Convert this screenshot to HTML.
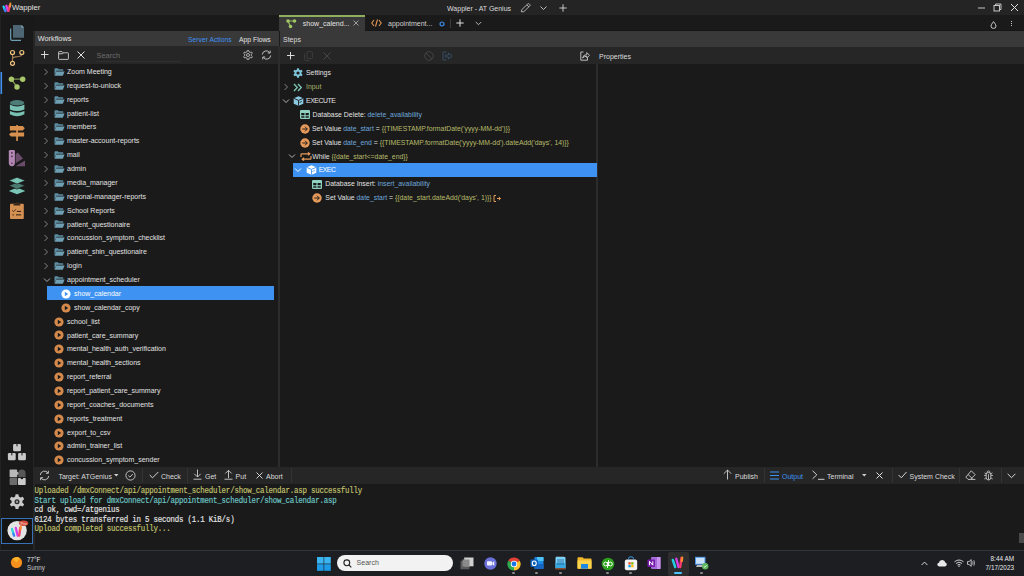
<!DOCTYPE html>
<html><head><meta charset="utf-8">
<style>
*{box-sizing:border-box;margin:0;padding:0}
html,body{width:1024px;height:576px;overflow:hidden;background:#1a1a1a;font-family:"Liberation Sans",sans-serif;font-size:7px;color:#e2e2e2}
.abs{position:absolute}
.row{position:absolute;left:0;width:279px;height:13.87px}
.row .ic{position:absolute;top:0;height:13.87px;display:flex;align-items:center}
.row .tx{position:absolute;top:0;line-height:13.87px;white-space:nowrap;color:#e2e2e2}
.sel{position:absolute;background:#3e93f2}
.srow{position:absolute;left:279px;width:318px;height:13.87px}
.srow .ic{position:absolute;top:0;height:13.87px;display:flex;align-items:center}
.srow .tx{position:absolute;top:0;line-height:13.87px;white-space:nowrap;color:#e2e2e2;font-size:6.88px}
.b{color:#6fa9dc}.g{color:#b7bb6a}.w{color:#e2e2e2}
.tb{position:absolute;display:flex;align-items:center;justify-content:center}
.t{position:absolute;white-space:nowrap}
.mono{font-family:"Liberation Mono",monospace;font-size:7.4px;letter-spacing:-0.18px;line-height:8.1px;white-space:pre;transform:scaleY(1.19);transform-origin:0 0;-webkit-text-stroke:0.15px}
.sep{position:absolute;width:1px;background:#333}
</style></head><body>
<!-- title bar -->
<div class="abs" style="left:0;top:0;width:1024px;height:15px;background:#242424"></div>
<!-- dark under title -->
<div class="abs" style="left:0;top:15px;width:279px;height:16px;background:#1a1a1a"></div>
<!-- sidebar -->
<div class="abs" style="left:0;top:15px;width:34px;height:535px;background:#191919"></div>

<!-- left panel -->
<div class="abs" style="left:0px;top:15px;width:1px;height:535px;background:#222222"></div>
<div class="abs" style="left:33px;top:31px;width:2px;height:519px;background:#262626"></div>
<div class="abs" style="left:35px;top:31px;width:244px;height:15px;background:#393939"></div>
<div class="abs" style="left:34px;top:46px;width:245px;height:18px;background:#262626"></div>
<div class="abs" style="left:34px;top:64px;width:245px;height:403px;background:#1a1a1a"></div>
<div class="abs" style="left:278px;top:46px;width:2px;height:421px;background:#2c2c2c"></div>

<!-- tab bar -->
<div class="abs" style="left:280px;top:15px;width:744px;height:16px;background:#1a1a1a"></div>
<div class="abs" style="left:279px;top:15px;width:86px;height:16px;background:#393939"></div>
<div class="abs" style="left:279px;top:15px;width:86px;height:2px;background:#8fae5e"></div>
<!-- steps header -->
<div class="abs" style="left:280px;top:31px;width:744px;height:16px;background:#393939"></div>
<div class="abs" style="left:365px;top:30px;width:659px;height:1px;background:#151515"></div>
<!-- steps toolbar -->
<div class="abs" style="left:280px;top:47px;width:317px;height:17px;background:#262626"></div>
<div class="abs" style="left:597px;top:47px;width:427px;height:17px;background:#262626"></div>
<div class="abs" style="left:596px;top:64px;width:2px;height:403px;background:#2c2c2c"></div>

<!-- bottom toolbar -->
<div class="abs" style="left:34px;top:467px;width:990px;height:17px;background:#262626"></div>
<!-- taskbar -->
<div class="abs" style="left:0;top:550px;width:1024px;height:26px;background:#1c1e22;border-top:1px solid #303338"></div>


<!-- title bar content -->
<svg class="abs" style="left:2px;top:2px" width="10" height="11" viewBox="0 0 10 11">
<path d="M1.6 4.6 L3.3 8.8" stroke="#22d3ee" stroke-width="2.3" stroke-linecap="round"/>
<path d="M2.6 7.2 L3.4 9" stroke="#3b82f6" stroke-width="2.2" stroke-linecap="round"/>
<path d="M4.4 3.8 L6 8.8" stroke="#d946ef" stroke-width="2.3" stroke-linecap="round"/>
<path d="M7.6 3.6 L6.6 8.8" stroke="#fb3a6e" stroke-width="2.3" stroke-linecap="round"/>
<path d="M8.4 1.6 L8 4.6" stroke="#fb923c" stroke-width="2" stroke-linecap="round"/>
</svg>
<div class="t" style="left:12px;top:0.3px;line-height:15px;font-size:7.7px;color:#e4e4e4">Wappler</div>
<div class="t" style="left:447px;top:0.5px;line-height:16px;font-size:7px;color:#dcdcdc">Wappler - AT Genius</div>
<svg class="abs" style="left:520px;top:3px" width="11" height="10" viewBox="0 0 11 10"><path d="M1.3 8.8 L1.8 6.6 L7.8 0.9 Q8.5 0.3 9.2 0.9 L9.9 1.6 Q10.4 2.3 9.8 2.9 L3.8 8.7 Z M6.8 1.9 L8.9 3.9" fill="none" stroke="#d0d0d0" stroke-width="0.8" stroke-linejoin="round"/></svg>
<svg class="abs" style="left:540px;top:5px" width="7" height="6" viewBox="0 0 7 6"><path d="M0.5 1.5 L3.5 4.5 L6.5 1.5" fill="none" stroke="#d0d0d0" stroke-width="0.9"/></svg>
<svg class="abs" style="left:559px;top:4px" width="8" height="8" viewBox="0 0 8 8"><path d="M4 0.3 V7.7 M0.3 4 H7.7" fill="none" stroke="#d8d8d8" stroke-width="0.9"/></svg>
<svg class="abs" style="left:978px;top:7px" width="8" height="2" viewBox="0 0 8 2"><path d="M0 1 H7" stroke="#d8d8d8" stroke-width="0.9"/></svg>
<svg class="abs" style="left:993px;top:3px" width="9" height="9" viewBox="0 0 9 9"><rect x="1" y="2.5" width="5.5" height="5.5" fill="none" stroke="#d8d8d8" stroke-width="0.9"/><path d="M2.6 2.5 V1 H8 V6.5 H6.5" fill="none" stroke="#d8d8d8" stroke-width="0.9"/></svg>
<svg class="abs" style="left:1010px;top:3px" width="9" height="9" viewBox="0 0 9 9"><path d="M1 1 L8 8 M8 1 L1 8" stroke="#e0e0e0" stroke-width="1"/></svg>

<!-- tab bar content -->
<svg class="abs" style="left:286px;top:18.8px" width="11" height="10" viewBox="0 0 11 10"><path d="M2 2 L8.5 2 M2 2 L4.5 7.5" stroke="#94b85a" stroke-width="1.2"/><circle cx="2" cy="2" r="1.8" fill="#a3c766"/><circle cx="8.5" cy="2" r="1.8" fill="#a3c766"/><circle cx="4.5" cy="7.5" r="1.8" fill="#a3c766"/></svg>
<div class="t" style="left:302.8px;top:16px;line-height:16px;color:#e2e2e2">show_calend...</div>
<svg class="abs" style="left:353px;top:20px" width="6" height="6" viewBox="0 0 6 6"><path d="M0.5 0.5 L5.5 5.5 M5.5 0.5 L0.5 5.5" stroke="#b8b8b8" stroke-width="0.8"/></svg>
<svg class="abs" style="left:371px;top:19px" width="11" height="8" viewBox="0 0 11 8"><path d="M3 1 L0.8 4 L3 7 M8 1 L10.2 4 L8 7 M6.5 0.5 L4.5 7.5" fill="none" stroke="#e0954f" stroke-width="1.1"/></svg>
<div class="t" style="left:388px;top:16px;line-height:16px;color:#d0d0d0">appointment...</div>
<svg class="abs" style="left:439px;top:20.5px" width="6" height="6" viewBox="0 0 6 6"><circle cx="3" cy="3" r="2" fill="none" stroke="#3f92f0" stroke-width="1.2"/></svg>
<div class="abs" style="left:450px;top:19px;width:1px;height:9px;background:#3a3a3a"></div>
<svg class="abs" style="left:456px;top:19px" width="8" height="8" viewBox="0 0 8 8"><path d="M4 0.3 V7.7 M0.3 4 H7.7" fill="none" stroke="#e0e0e0" stroke-width="1"/></svg>
<svg class="abs" style="left:475px;top:21px" width="7" height="5" viewBox="0 0 7 5"><path d="M0.8 1 L3.5 3.7 L6.2 1" fill="none" stroke="#c8c8c8" stroke-width="0.9"/></svg>
<svg class="abs" style="left:989.5px;top:21px" width="7" height="8" viewBox="0 0 7 8"><path d="M3.5 0.6 Q1 3.6 1 5.1 Q1 7.4 3.5 7.4 Q6 7.4 6 5.1 Q6 3.6 3.5 0.6 Z" fill="none" stroke="#d8d8d8" stroke-width="0.9"/></svg>
<div class="abs" style="left:1011px;top:21px;width:1px;height:1px;background:#c8c8c8"></div>
<div class="abs" style="left:1011px;top:23px;width:1px;height:1px;background:#c8c8c8"></div>
<div class="abs" style="left:1011px;top:25px;width:1px;height:1px;background:#c8c8c8"></div>

<!-- left panel header -->
<div class="t" style="left:37.8px;top:31.3px;line-height:15px;font-size:7.3px;color:#e2e2e2">Workflows</div>
<div class="t" style="left:188px;top:31.5px;line-height:15px;font-size:6.75px;color:#3f92f0">Server Actions</div>
<div class="t" style="left:239px;top:31.5px;line-height:15px;font-size:6.8px;color:#e2e2e2">App Flows</div>
<!-- left toolbar -->
<svg class="abs" style="left:41px;top:51px" width="8" height="8" viewBox="0 0 8 8"><path d="M3.5 0 V7.5 M0 3.5 H7.5" fill="none" stroke="#e0e0e0" stroke-width="0.95"/></svg>
<svg class="abs" style="left:58px;top:51px" width="11" height="9" viewBox="0 0 11 9"><path d="M0.6 1.2 Q0.6 0.6 1.2 0.6 L4 0.6 L5 1.8 L9.8 1.8 Q10.4 1.8 10.4 2.4 L10.4 7.8 Q10.4 8.4 9.8 8.4 L1.2 8.4 Q0.6 8.4 0.6 7.8 Z M0.6 2.8 H4.5 L5.2 1.9" fill="none" stroke="#cfcfcf" stroke-width="0.9"/></svg>
<svg class="abs" style="left:77px;top:51px" width="8" height="8" viewBox="0 0 8 8"><path d="M0.5 0.5 L7.5 7.5 M7.5 0.5 L0.5 7.5" fill="none" stroke="#e0e0e0" stroke-width="1"/></svg>
<div class="t" style="left:96.4px;top:47.3px;line-height:17px;font-size:7.5px;color:#6c6c6c">Search</div>
<div class="abs" style="left:96px;top:61px;width:85px;height:1px;background:#2f2f2f"></div>
<svg class="abs" style="left:243px;top:50px" width="10" height="10" viewBox="0 0 10 10"><path d="M4.2 0.6 H5.8 L6.1 1.9 L7.2 2.5 L8.5 2 L9.3 3.4 L8.3 4.3 V5.7 L9.3 6.6 L8.5 8 L7.2 7.5 L6.1 8.1 L5.8 9.4 H4.2 L3.9 8.1 L2.8 7.5 L1.5 8 L0.7 6.6 L1.7 5.7 V4.3 L0.7 3.4 L1.5 2 L2.8 2.5 L3.9 1.9 Z" fill="none" stroke="#cfcfcf" stroke-width="0.8" stroke-linejoin="round"/><circle cx="5" cy="5" r="1.5" fill="none" stroke="#cfcfcf" stroke-width="0.8"/></svg>
<svg class="abs" style="left:261px;top:50px" width="11" height="10" viewBox="0 0 11 10"><path d="M1.3 4.5 A4 4 0 0 1 8.6 2.6 M9.7 5.5 A4 4 0 0 1 2.4 7.4" fill="none" stroke="#cfcfcf" stroke-width="0.9"/><path d="M9.2 0.6 V3 H6.8 M1.8 9.4 V7 H4.2" fill="none" stroke="#cfcfcf" stroke-width="0.9"/></svg>

<!-- steps header -->
<div class="t" style="left:283px;top:32px;line-height:16px;color:#dedede">Steps</div>
<!-- steps toolbar -->
<svg class="abs" style="left:287px;top:52px" width="8" height="8" viewBox="0 0 8 8"><path d="M3.5 0 V7.5 M0 3.5 H7.5" fill="none" stroke="#e4e4e4" stroke-width="0.95"/></svg>
<svg class="abs" style="left:304px;top:51px" width="9" height="10" viewBox="0 0 9 10"><rect x="3" y="0.6" width="5.4" height="7" rx="1" fill="none" stroke="#404040" stroke-width="0.9"/><path d="M1.5 2.4 Q0.6 2.4 0.6 3.3 V8.6 Q0.6 9.4 1.5 9.4 H5.5" fill="none" stroke="#404040" stroke-width="0.9"/></svg>
<svg class="abs" style="left:323px;top:52px" width="8" height="8" viewBox="0 0 8 8"><path d="M0.5 0.5 L7.5 7.5 M7.5 0.5 L0.5 7.5" fill="none" stroke="#4a4a4a" stroke-width="0.9"/></svg>
<svg class="abs" style="left:424px;top:51px" width="10" height="10" viewBox="0 0 10 10"><circle cx="5" cy="5" r="4.3" fill="none" stroke="#474747" stroke-width="0.9"/><path d="M2 2 L8 8" stroke="#474747" stroke-width="0.9"/></svg>
<svg class="abs" style="left:442px;top:51px" width="11" height="10" viewBox="0 0 11 10"><path d="M4.5 1 H1 V9 H4.5" fill="none" stroke="#35506a" stroke-width="0.9"/><path d="M3.3 4 H6.6 V2 L10.2 5 L6.6 8 V6 H3.3 Z" fill="none" stroke="#35506a" stroke-width="0.9" stroke-linejoin="round"/></svg>
<svg class="abs" style="left:580px;top:51px" width="10" height="10" viewBox="0 0 10 10"><path d="M3.5 1 H0.8 V9.2 H7.5 V7" fill="none" stroke="#cfcfcf" stroke-width="0.9"/><path d="M2.6 7 Q3 3.6 6.8 3.6 V1.6 L9.5 4.3 L6.8 7 V5.2 Q4.2 5.2 2.6 7 Z" fill="none" stroke="#cfcfcf" stroke-width="0.9"/></svg>
<div class="t" style="left:599px;top:48px;line-height:17px;color:#dedede">Properties</div>


<!-- sidebar icons -->
<svg class="abs" style="left:0;top:15px" width="34" height="535" viewBox="0 15 34 535">
 <!-- pages -->
 <path d="M13 25 H21.5 L24 27.5 V37.7 H13 Z" fill="#4e6673"/>
 <path d="M21.5 25 V27.5 H24" fill="#8bb3c4"/>
 <path d="M10.7 28.5 V39 Q10.7 40.3 12 40.3 H21" fill="none" stroke="#6d9fb6" stroke-width="1.2"/>
 <!-- git -->
 <path d="M12.5 54.5 V61.5 M12.5 59 Q12.5 57 16 56.8 Q21.8 56.5 21.8 54.5" fill="none" stroke="#9c7a52" stroke-width="1.2"/>
 <circle cx="12.5" cy="52.5" r="2" fill="#222" stroke="#efc27c" stroke-width="1.2"/>
 <circle cx="21.8" cy="52.5" r="2" fill="#222" stroke="#efc27c" stroke-width="1.2"/>
 <circle cx="12.5" cy="63.3" r="2" fill="#222" stroke="#efc27c" stroke-width="1.2"/>
 <!-- active bar -->
 <rect x="0.5" y="72" width="1.6" height="22" fill="#3f92f0"/>
 <!-- flow -->
 <path d="M11.4 79.2 H22.7 M11.4 79.2 L17 87" stroke="#7c9450" stroke-width="1.3"/>
 <circle cx="11.4" cy="79.2" r="2.7" fill="#a8c66a"/>
 <circle cx="22.7" cy="79.2" r="2.7" fill="#a8c66a"/>
 <circle cx="17" cy="87" r="2.7" fill="#a8c66a"/>
 <!-- db -->
 <ellipse cx="17.1" cy="102.8" rx="7.2" ry="2.7" fill="#4e7c79"/>
 <path d="M9.9 104.5 Q17.1 108.5 24.4 104.5 V109.5 Q17.1 112.5 9.9 109.5 Z" fill="#79c1b2"/>
 <path d="M9.9 111 Q17.1 114.5 24.4 111 V114.3 Q17.1 118.2 9.9 114.3 Z" fill="#79c1b2"/>
 <!-- signpost -->
 <rect x="16.2" y="125" width="1.7" height="16" fill="#d8904e"/>
 <path d="M9.9 126 H22.8 L24.8 128.2 L22.8 130.4 H9.9 Z" fill="#d8904e"/>
 <path d="M24.1 132.5 H11 L9 134.5 L11 136.5 H24.1 Z" fill="#d8904e"/>
 <!-- palette -->
 <path d="M15.6 154.2 L17.8 152.4 L23 158.6 L15.6 163.2 Z" fill="#6a4b6a"/>
 <path d="M15.6 166.2 L25 160.6 V166.2 Z" fill="#6a4b6a"/>
 <path d="M8.8 151.2 Q8.8 150 10 150 H13.7 Q14.9 150 14.9 151.2 V163.1 Q14.9 166.2 11.85 166.2 Q8.8 166.2 8.8 163.1 Z" fill="#b387b3"/>
 <circle cx="11.9" cy="152.9" r="0.8" fill="#3a2a3a"/><circle cx="11.9" cy="156.4" r="0.8" fill="#3a2a3a"/><circle cx="11.9" cy="163.2" r="0.8" fill="#3a2a3a"/>
 <!-- layers -->
 <path d="M17 187.6 L25.3 190.9 L17 194.3 L8.8 190.9 Z" fill="#79c6b6"/>
 <path d="M17 182.4 L25.3 185.7 L17 189.1 L8.8 185.7 Z" fill="#4b7a70" stroke="#191919" stroke-width="0.7"/>
 <path d="M17 177.3 L25.3 180.6 L17 184 L8.8 180.6 Z" fill="#79c6b6" stroke="#191919" stroke-width="0.7"/>
 <!-- clipboard -->
 <rect x="10" y="203.8" width="13.8" height="15.1" rx="1" fill="#d48f52"/>
 <path d="M13.5 205.5 H20.3 V204 H18.5 Q18.5 202 17 202 Q15.5 202 15.5 204 H13.5 Z" fill="#3a2818"/>
 <path d="M12.3 210.3 L13.6 211.7 L16 209.2" fill="none" stroke="#3a2818" stroke-width="0.9"/>
 <rect x="16.9" y="210.9" width="4.2" height="1.1" fill="#3a2818"/>
 <rect x="12.5" y="214.3" width="1.3" height="1.1" fill="#3a2818"/><rect x="16" y="214.3" width="5.1" height="1.1" fill="#3a2818"/>
 <!-- boxes -->
 <rect x="13.1" y="443.9" width="7.8" height="7.4" rx="1.3" fill="#c9c9c9"/>
 <rect x="7.9" y="453" width="7.8" height="7.2" rx="1.3" fill="#c9c9c9"/>
 <rect x="18.1" y="453" width="7.8" height="7.2" rx="1.3" fill="#c9c9c9"/>
 <rect x="16.4" y="443.9" width="1.2" height="2.4" fill="#333"/><rect x="11.2" y="453" width="1.2" height="2.4" fill="#333"/><rect x="21.4" y="453" width="1.2" height="2.4" fill="#333"/>
 <!-- puzzle -->
 <rect x="9.6" y="469.6" width="7.6" height="7.6" rx="0.8" fill="#b8b8b8"/>
 <circle cx="17.6" cy="473.4" r="1.4" fill="#b8b8b8"/>
 <path d="M18.4 477.2 V472.4 Q18.4 469.4 21.8 469.4 Q25.6 469.4 25.6 473 V477.2 Z" fill="#575757"/>
 <rect x="9.6" y="477.9" width="7.6" height="7.2" rx="0.8" fill="#6c6c6c"/>
 <rect x="18" y="477.9" width="7.7" height="7.2" rx="0.8" fill="#cbcbcb"/>
 <circle cx="21.9" cy="478" r="1.3" fill="#191919"/>
 <!-- gear -->
 <path d="M15.6 494.3 H18.4 L18.8 496.6 L20.6 497.6 L22.8 496.8 L24.2 499.2 L22.4 500.7 V502.7 L24.2 504.2 L22.8 506.6 L20.6 505.8 L18.8 506.8 L18.4 509.1 H15.6 L15.2 506.8 L13.4 505.8 L11.2 506.6 L9.8 504.2 L11.6 502.7 V500.7 L9.8 499.2 L11.2 496.8 L13.4 497.6 L15.2 496.6 Z" fill="#c9c9c9"/>
 <circle cx="17" cy="501.7" r="2.5" fill="#2a2a2a"/><circle cx="17" cy="501.7" r="1.2" fill="#9a9a9a"/>
 <!-- avatar -->
 <rect x="1.5" y="518.5" width="31" height="25" fill="#141414" stroke="#3671b8" stroke-width="1"/>
 <circle cx="17.1" cy="530.6" r="9.7" fill="#e4e4e4"/>
 <path d="M12 529 L13.8 535" stroke="#2ad4d8" stroke-width="2.3" stroke-linecap="round"/>
 <path d="M13.4 533.5 L14.2 535.8" stroke="#3b82f6" stroke-width="2.2" stroke-linecap="round"/>
 <path d="M15.8 527.8 L17.6 535.6" stroke="#d63fe6" stroke-width="2.3" stroke-linecap="round"/>
 <path d="M20.2 528 L19.2 535.6" stroke="#fb3a6e" stroke-width="2.3" stroke-linecap="round"/>
 <path d="M20.8 526.6 L20.4 529.5" stroke="#fb8c2c" stroke-width="2" stroke-linecap="round"/>
 <ellipse cx="23.6" cy="523.3" rx="4.6" ry="2.7" fill="#d64c3c"/>
 <text x="20.6" y="524.9" font-family="Liberation Sans" font-size="4" fill="#f6e0dc">Pro</text>
</svg>


<!-- bottom toolbar content -->
<svg class="abs" style="left:39px;top:470px" width="11" height="11" viewBox="0 0 11 11"><path d="M1.3 5 A4.2 4.2 0 0 1 9 3 M9.7 6 A4.2 4.2 0 0 1 2 8" fill="none" stroke="#cfcfcf" stroke-width="0.9"/><path d="M9.4 0.8 V3.3 H6.9 M1.6 10.2 V7.7 H4.1" fill="none" stroke="#cfcfcf" stroke-width="0.9"/></svg>
<div class="t" style="left:58.4px;top:467.5px;line-height:17px;color:#dcdcdc">Target: ATGenius</div>
<svg class="abs" style="left:113.5px;top:474px" width="5" height="3" viewBox="0 0 5 3"><path d="M0 0 H4.5 L2.25 2.6 Z" fill="#d0d0d0"/></svg>
<svg class="abs" style="left:125px;top:470px" width="11" height="11" viewBox="0 0 11 11"><circle cx="5.5" cy="5.5" r="4.6" fill="none" stroke="#cfcfcf" stroke-width="0.9"/><path d="M3.3 5.6 L4.9 7.1 L7.8 4" fill="none" stroke="#cfcfcf" stroke-width="0.9"/></svg>
<div class="sep" style="left:142px;top:468px;height:15px;background:#333"></div>
<svg class="abs" style="left:148.5px;top:471px" width="10" height="8" viewBox="0 0 10 8"><path d="M0.7 4 L3.5 6.8 L9.3 1" fill="none" stroke="#d8d8d8" stroke-width="1"/></svg>
<div class="t" style="left:161px;top:467.5px;line-height:17px;color:#dcdcdc">Check</div>
<div class="sep" style="left:186.5px;top:468px;height:15px;background:#333"></div>
<svg class="abs" style="left:193px;top:469px" width="9" height="11" viewBox="0 0 9 11"><path d="M4.5 0.5 V8 M1.3 4.8 L4.5 8 L7.7 4.8 M0.5 10.2 H8.5" fill="none" stroke="#d0d0d0" stroke-width="0.9"/></svg>
<div class="t" style="left:205px;top:467.5px;line-height:17px;color:#dcdcdc">Get</div>
<svg class="abs" style="left:224px;top:469px" width="9" height="11" viewBox="0 0 9 11"><path d="M4.5 9 V1.3 M1.3 4.5 L4.5 1.3 L7.7 4.5 M0.5 10.2 H8.5" fill="none" stroke="#d0d0d0" stroke-width="0.9"/></svg>
<div class="t" style="left:235.6px;top:467.5px;line-height:17px;color:#dcdcdc">Put</div>
<svg class="abs" style="left:255.5px;top:472px" width="7" height="7" viewBox="0 0 7 7"><path d="M0.5 0.5 L6.5 6.5 M6.5 0.5 L0.5 6.5" fill="none" stroke="#e0e0e0" stroke-width="0.9"/></svg>
<div class="t" style="left:266px;top:467.5px;line-height:17px;color:#dcdcdc">Abort</div>
<div class="sep" style="left:290.5px;top:468px;height:15px;background:#333"></div>

<svg class="abs" style="left:723px;top:469px" width="9" height="11" viewBox="0 0 9 11"><path d="M4.5 10.5 V1 M0.8 4.7 L4.5 1 L8.2 4.7" fill="none" stroke="#d0d0d0" stroke-width="0.9"/></svg>
<div class="t" style="left:735px;top:467.5px;line-height:17px;color:#dcdcdc">Publish</div>
<div class="sep" style="left:764px;top:468px;height:15px;background:#333"></div>
<svg class="abs" style="left:770px;top:471px" width="9" height="9" viewBox="0 0 9 9"><path d="M0 1 H9 M0 4.5 H9 M0 8 H9" fill="none" stroke="#3f92f0" stroke-width="1"/></svg>
<div class="t" style="left:782px;top:467.5px;line-height:17px;color:#3f92f0">Output</div>
<svg class="abs" style="left:811.5px;top:470px" width="13" height="10" viewBox="0 0 13 10"><path d="M0.6 0.8 L4.8 4.8 L0.6 8.8 M6 9.3 H12.5" fill="none" stroke="#d8d8d8" stroke-width="0.95"/></svg>
<div class="t" style="left:827px;top:467.5px;line-height:17px;color:#dcdcdc">Terminal</div>
<svg class="abs" style="left:862px;top:474px" width="5" height="3" viewBox="0 0 5 3"><path d="M0 0 H4.5 L2.25 2.6 Z" fill="#d0d0d0"/></svg>
<svg class="abs" style="left:876px;top:472px" width="7" height="7" viewBox="0 0 7 7"><path d="M0.5 0.5 L6.5 6.5 M6.5 0.5 L0.5 6.5" fill="none" stroke="#e4e4e4" stroke-width="1"/></svg>
<div class="sep" style="left:891.5px;top:468px;height:15px;background:#333"></div>
<svg class="abs" style="left:898px;top:471px" width="9" height="8" viewBox="0 0 9 8"><path d="M0.6 4 L3.3 6.8 L8.5 1" fill="none" stroke="#d8d8d8" stroke-width="1"/></svg>
<div class="t" style="left:909.6px;top:467.5px;line-height:17px;color:#dcdcdc">System Check</div>
<div class="sep" style="left:958.5px;top:468px;height:15px;background:#333"></div>
<svg class="abs" style="left:964.5px;top:470px" width="11" height="10" viewBox="0 0 11 10"><path d="M6.3 0.8 L10.2 4.7 L5.4 9.4 H3.1 L0.8 7.1 Z M3.2 4.6 L7.6 8.9 M5.5 9.4 H10.4" fill="none" stroke="#d0d0d0" stroke-width="0.9" stroke-linejoin="round"/></svg>
<svg class="abs" style="left:983px;top:470px" width="11" height="11" viewBox="0 0 11 11"><path d="M3.2 4 Q3.2 2.6 5.5 2.6 Q7.8 2.6 7.8 4 V7.4 Q7.8 10 5.5 10 Q3.2 10 3.2 7.4 Z" fill="none" stroke="#d0d0d0" stroke-width="0.85"/><path d="M4 2.8 Q4 0.9 5.5 0.9 Q7 0.9 7 2.8 M5.5 4.2 V9.8 M3.2 5.4 H1 M7.8 5.4 H10 M3.2 7.8 L1.3 9 M7.8 7.8 L9.7 9 M3.2 4 L1.6 2.8 M7.8 4 L9.4 2.8" fill="none" stroke="#d0d0d0" stroke-width="0.8"/></svg>
<div class="sep" style="left:1000.5px;top:468px;height:15px;background:#333"></div>
<svg class="abs" style="left:1007px;top:473px" width="9" height="6" viewBox="0 0 9 6"><path d="M0.6 0.8 L4.5 4.7 L8.4 0.8" fill="none" stroke="#d8d8d8" stroke-width="1"/></svg>

<!-- output -->
<div class="t mono" style="left:34.4px;top:485.6px;color:#c3c36f">Uploaded /dmxConnect/api/appointment_scheduler/show_calendar.asp successfully
<span style="color:#6fc8c8">Start upload for dmxConnect/api/appointment_scheduler/show_calendar.asp</span>
<span style="color:#e4e4e4">cd ok, cwd=/atgenius</span>
<span style="color:#e4e4e4">6124 bytes transferred in 5 seconds (1.1 KiB/s)</span>
Upload completed successfully...</div>
<div class="abs" style="left:1019px;top:533px;width:5px;height:10px;background:#4a4a4a"></div>

<!-- taskbar content -->
<svg class="abs" style="left:10px;top:556px" width="13" height="13" viewBox="0 0 13 13"><circle cx="6.5" cy="6.5" r="5.6" fill="#f5901e"/><path d="M2.5 3 A5.6 5.6 0 0 1 10 2.2 L6.5 6.5 Z" fill="#fbb32a"/></svg>
<div class="t" style="left:27px;top:555.5px;font-size:6.3px;line-height:8px;color:#e8e8e8">77°F</div>
<div class="t" style="left:27px;top:563.5px;font-size:6.3px;line-height:8px;color:#c8c8c8">Sunny</div>

<svg class="abs" style="left:316.6px;top:556.7px" width="14" height="14" viewBox="0 0 14 14"><rect x="0" y="0" width="6.6" height="6.6" fill="#3bb4f2"/><rect x="7.2" y="0" width="6.6" height="6.6" fill="#3bb4f2"/><rect x="0" y="7.2" width="6.6" height="6.6" fill="#1f9ae6"/><rect x="7.2" y="7.2" width="6.6" height="6.6" fill="#1f9ae6"/></svg>
<div class="abs" style="left:336.7px;top:554.8px;width:116.6px;height:16.6px;border-radius:8.3px;background:#f2f2f2"></div>
<svg class="abs" style="left:342.5px;top:558.5px" width="9" height="9" viewBox="0 0 9 9"><circle cx="3.8" cy="3.8" r="2.9" fill="none" stroke="#202020" stroke-width="1.1"/><path d="M5.9 5.9 L8.3 8.3" stroke="#202020" stroke-width="1.2"/></svg>
<div class="t" style="left:356.6px;top:555px;line-height:16px;font-size:7px;color:#555">Search</div>

<!-- task view -->
<svg class="abs" style="left:459.5px;top:556.5px" width="14" height="13" viewBox="0 0 14 13"><rect x="0.5" y="3.8" width="9" height="8.5" fill="#5a5a5a"/><rect x="4.2" y="0.5" width="9.3" height="8.8" fill="#d0d0d0"/><rect x="2.5" y="2.5" width="7" height="7" fill="#8a8a8a"/></svg>
<!-- teams -->
<svg class="abs" style="left:483.5px;top:556.5px" width="13" height="13" viewBox="0 0 13 13"><circle cx="6.5" cy="6.5" r="6.2" fill="#6b6fd8"/><rect x="3" y="4.2" width="5" height="4.4" rx="0.8" fill="#f0f0ff"/><path d="M8.4 5.5 L10.3 4.3 V8.7 L8.4 7.5 Z" fill="#f0f0ff"/></svg>
<!-- chrome -->
<svg class="abs" style="left:506.5px;top:556.5px" width="14" height="14" viewBox="0 0 14 14"><path d="M7 7 L1.284 3.7 A6.6 6.6 0 0 1 12.716 3.7 Z" fill="#e34133"/><path d="M7 7 L12.716 3.7 A6.6 6.6 0 0 1 7 13.6 Z" fill="#fbc02d"/><path d="M7 7 L7 13.6 A6.6 6.6 0 0 1 1.284 3.7 Z" fill="#2da94f"/><circle cx="7" cy="7" r="3.2" fill="#fff"/><circle cx="7" cy="7" r="2.4" fill="#1a73e8"/></svg>
<!-- outlook -->
<svg class="abs" style="left:530px;top:556px" width="14" height="14" viewBox="0 0 14 14"><rect x="4.5" y="1" width="9" height="12" rx="1" fill="#1e88e5"/><rect x="7" y="1" width="6.5" height="4" fill="#4fc3f7"/><rect x="4.5" y="8" width="9" height="5" fill="#1565c0"/><rect x="0.5" y="3.5" width="7.5" height="7.5" rx="0.8" fill="#0d5fb8"/><ellipse cx="4.25" cy="7.25" rx="2" ry="2.3" fill="none" stroke="#fff" stroke-width="1.1"/></svg>
<!-- notepad -->
<svg class="abs" style="left:555px;top:556px" width="11" height="14" viewBox="0 0 11 14"><rect x="0.5" y="1" width="10" height="12" rx="0.8" fill="#7dd3f7"/><rect x="0.5" y="7" width="10" height="5" fill="#3aa6e0"/><rect x="0.5" y="12" width="10" height="1.5" fill="#8a4a2a"/><path d="M2 4 H9 M2 6 H9 M2 8 H9" stroke="#1f5f9a" stroke-width="0.8"/><path d="M2 1 V0.2 M4 1 V0.2 M6 1 V0.2 M8 1 V0.2" stroke="#cde" stroke-width="0.6"/></svg>
<!-- explorer -->
<svg class="abs" style="left:577px;top:557px" width="15" height="12" viewBox="0 0 15 12"><path d="M0.5 1 Q0.5 0.3 1.2 0.3 H5.5 L6.8 1.6 H13.8 Q14.5 1.6 14.5 2.3 V11 Q14.5 11.7 13.8 11.7 H1.2 Q0.5 11.7 0.5 11 Z" fill="#f3b829"/><rect x="0.5" y="3.5" width="14" height="8.2" fill="#fcd34d"/><rect x="4" y="7" width="7" height="4.7" fill="#1e88e5"/></svg>
<!-- quickbooks -->
<svg class="abs" style="left:600.5px;top:556.5px" width="14" height="14" viewBox="0 0 14 14"><circle cx="7" cy="7" r="6.3" fill="#2ca01c"/><circle cx="4.6" cy="7" r="1.9" fill="none" stroke="#fff" stroke-width="1"/><path d="M6.5 5 V10.8" stroke="#fff" stroke-width="1"/><circle cx="9.4" cy="7" r="1.9" fill="none" stroke="#fff" stroke-width="1"/><path d="M7.5 3.2 V9" stroke="#fff" stroke-width="1"/></svg>
<!-- store -->
<svg class="abs" style="left:623.5px;top:555.5px" width="14" height="15" viewBox="0 0 14 15"><rect x="0.8" y="3.5" width="12.4" height="10.8" rx="2" fill="#f4f4f4"/><path d="M4.5 3.5 V2.4 Q4.5 0.8 7 0.8 Q9.5 0.8 9.5 2.4 V3.5" fill="none" stroke="#3aa0e8" stroke-width="1"/><rect x="4.4" y="6.2" width="2.3" height="2.3" fill="#f25022"/><rect x="7.2" y="6.2" width="2.3" height="2.3" fill="#7fba00"/><rect x="4.4" y="9" width="2.3" height="2.3" fill="#00a4ef"/><rect x="7.2" y="9" width="2.3" height="2.3" fill="#ffb900"/></svg>
<!-- onenote -->
<svg class="abs" style="left:647px;top:556px" width="14" height="14" viewBox="0 0 14 14"><rect x="4" y="1" width="9.5" height="12" rx="1" fill="#a46bd8"/><rect x="10" y="1" width="3.5" height="12" fill="#ca92f0"/><rect x="0.5" y="3.5" width="7.5" height="7.5" rx="0.8" fill="#7719aa"/><path d="M2.5 9.2 V5.3 L5.8 9.2 V5.3" fill="none" stroke="#fff" stroke-width="1"/></svg>
<!-- wappler active -->
<div class="abs" style="left:667.5px;top:552px;width:21px;height:24px;border-radius:2px;background:#2e2e2e"></div>
<svg class="abs" style="left:671px;top:556px" width="14" height="13" viewBox="0 0 14 13"><path d="M1.8 4 L4.2 11" stroke="#22cfe0" stroke-width="2.4" stroke-linecap="round"/><path d="M5.3 2.8 L7.5 11" stroke="#d83fe8" stroke-width="2.4" stroke-linecap="round"/><path d="M10.5 2 L9.2 11" stroke="#fb3a6e" stroke-width="2.4" stroke-linecap="round"/><path d="M11.2 1.6 L10.8 5" stroke="#fb8c2c" stroke-width="2.2" stroke-linecap="round"/></svg>
<div class="abs" style="left:674px;top:572px;width:8px;height:2px;border-radius:1px;background:#4cc2ff"></div>
<!-- remote desktop -->
<svg class="abs" style="left:694px;top:556px" width="15" height="14" viewBox="0 0 15 14"><rect x="1" y="0.8" width="10.5" height="8" fill="#4a90e2"/><rect x="2" y="1.8" width="8.5" height="6" fill="#c8e0f8"/><path d="M3 9 L9.5 9 L10.5 11 L2 11 Z" fill="#b8b8b8"/><circle cx="11.2" cy="10.3" r="3.2" fill="#5cb85c"/><path d="M9.8 10.3 L10.9 11.3 L12.7 9.3" fill="none" stroke="#fff" stroke-width="0.8"/></svg>
<!-- running dots -->
<div class="abs" style="left:511.5px;top:572px;width:3px;height:1.6px;border-radius:1px;background:#8a8a8a"></div>
<div class="abs" style="left:535px;top:572px;width:3px;height:1.6px;border-radius:1px;background:#8a8a8a"></div>
<div class="abs" style="left:559px;top:572px;width:3px;height:1.6px;border-radius:1px;background:#8a8a8a"></div>
<div class="abs" style="left:606px;top:572px;width:3px;height:1.6px;border-radius:1px;background:#8a8a8a"></div>
<div class="abs" style="left:629px;top:572px;width:3px;height:1.6px;border-radius:1px;background:#8a8a8a"></div>
<div class="abs" style="left:700px;top:572px;width:3px;height:1.6px;border-radius:1px;background:#8a8a8a"></div>

<!-- tray -->
<svg class="abs" style="left:920.5px;top:561px" width="7" height="5" viewBox="0 0 7 5"><path d="M0.6 4 L3.5 1.1 L6.4 4" fill="none" stroke="#e0e0e0" stroke-width="0.95"/></svg>
<svg class="abs" style="left:936.5px;top:558.5px" width="10" height="8" viewBox="0 0 10 8"><path d="M2.2 7.4 Q0.3 7.4 0.3 5.6 Q0.3 4 2 3.8 Q2.6 1 5.3 1 Q7.8 1 8.3 3.6 Q9.8 3.9 9.8 5.6 Q9.8 7.4 8 7.4 Z" fill="#e8e8e8"/></svg>
<svg class="abs" style="left:953.5px;top:558.5px" width="10" height="8" viewBox="0 0 10 8"><path d="M0.5 2.8 Q5 -0.8 9.5 2.8 M2 4.4 Q5 2 8 4.4 M3.5 6 Q5 4.8 6.5 6" fill="none" stroke="#e0e0e0" stroke-width="0.9"/><circle cx="5" cy="7.2" r="0.7" fill="#e0e0e0"/></svg>
<svg class="abs" style="left:966.5px;top:559px" width="8" height="8" viewBox="0 0 8 8"><path d="M0.5 2.6 H2 L4.2 0.6 V7.4 L2 5.4 H0.5 Z" fill="none" stroke="#e0e0e0" stroke-width="0.8"/><path d="M5.6 2.4 Q6.6 4 5.6 5.6 M6.8 1.2 Q8.2 4 6.8 6.8" fill="none" stroke="#e0e0e0" stroke-width="0.7"/></svg>
<div class="t" style="left:980px;top:554px;width:34px;text-align:right;font-size:6.4px;line-height:9px;color:#e8e8e8">8:44 AM</div>
<div class="t" style="left:980px;top:563px;width:34px;text-align:right;font-size:6.4px;line-height:9px;color:#e8e8e8">7/17/2023</div>

<!-- steps tree -->
<div class="srow" style="top:66.30px"><span class="ic" style="left:14px"><svg width="10" height="10" viewBox="0 0 10 10"><path d="M4.1 0.3 H5.9 L6.2 1.7 L7.3 2.3 L8.7 1.8 L9.6 3.4 L8.5 4.3 V5.7 L9.6 6.6 L8.7 8.2 L7.3 7.7 L6.2 8.3 L5.9 9.7 H4.1 L3.8 8.3 L2.7 7.7 L1.3 8.2 L0.4 6.6 L1.5 5.7 V4.3 L0.4 3.4 L1.3 1.8 L2.7 2.3 L3.8 1.7 Z" fill="#7fc3d9"/><circle cx="5" cy="5" r="1.6" fill="#1b1b1b"/></svg></span><span class="tx" style="left:27px;">Settings</span></div>
<div class="srow" style="top:80.17px"><span class="ic" style="left:4px"><svg width="6" height="8" viewBox="0 0 6 8"><path d="M1.5 1 L4.5 4 L1.5 7" fill="none" stroke="#8c8c8c" stroke-width="0.9"/></svg></span><span class="ic" style="left:14px"><svg width="10" height="9" viewBox="0 0 10 9"><path d="M1 1 L4.3 4.5 L1 8 M5 1 L8.3 4.5 L5 8" fill="none" stroke="#7fc9b5" stroke-width="1.3"/></svg></span><span class="tx" style="left:27px;"><span style="color:#a9b56a">Input</span></span></div>
<div class="srow" style="top:94.04px"><span class="ic" style="left:3px"><svg width="8" height="6" viewBox="0 0 8 6"><path d="M1 1.5 L4 4.5 L7 1.5" fill="none" stroke="#b8b8b8" stroke-width="0.95"/></svg></span><span class="ic" style="left:14px"><svg width="11" height="10" viewBox="0 0 11 10"><path d="M5.5 0.3 L10.3 2.3 V7.7 L5.5 9.7 L0.7 7.7 V2.3 Z" fill="#8ccae3"/><path d="M0.9 2.4 L5.5 4.4 L10.1 2.4 M5.5 4.4 V9.6" fill="none" stroke="#1b1b1b" stroke-width="0.9"/><path d="M6.4 6.5 L8.8 5.5" stroke="#1b1b1b" stroke-width="0.8"/></svg></span><span class="tx" style="left:27px;letter-spacing:-0.45px">EXECUTE</span></div>
<div class="srow" style="top:107.91px"><span class="ic" style="left:21px"><svg width="10" height="9" viewBox="0 0 10 9"><rect x="0.6" y="0.6" width="8.8" height="7.8" rx="0.6" fill="none" stroke="#8fd2c1" stroke-width="1.2"/><rect x="0.6" y="0.6" width="8.8" height="2.4" fill="#8fd2c1"/><path d="M5 3 V8.4 M0.6 5.7 H9.4" stroke="#8fd2c1" stroke-width="1.1"/></svg></span><span class="tx" style="left:33.5px;">Database Delete: <span class="b">delete_availability</span></span></div>
<div class="srow" style="top:121.78px"><span class="ic" style="left:20.5px"><svg width="10" height="10" viewBox="0 0 10 10"><circle cx="5" cy="5" r="4.7" fill="#e79a59"/><path d="M2.3 5 H7.3 M5 2.7 L7.3 5 L5 7.3" fill="none" stroke="#1b1b1b" stroke-width="0.95"/></svg></span><span class="tx" style="left:33px;">Set Value <span class="b">date_start</span> = <span class="g">{{TIMESTAMP.formatDate('yyyy-MM-dd')}}</span></span></div>
<div class="srow" style="top:135.65px"><span class="ic" style="left:20.5px"><svg width="10" height="10" viewBox="0 0 10 10"><circle cx="5" cy="5" r="4.7" fill="#e79a59"/><path d="M2.3 5 H7.3 M5 2.7 L7.3 5 L5 7.3" fill="none" stroke="#1b1b1b" stroke-width="0.95"/></svg></span><span class="tx" style="left:33px;">Set Value <span class="b">date_end</span> = <span class="g">{{TIMESTAMP.formatDate('yyyy-MM-dd').dateAdd('days', 14)}}</span></span></div>
<div class="srow" style="top:149.52px"><span class="ic" style="left:9px"><svg width="8" height="6" viewBox="0 0 8 6"><path d="M1 1.5 L4 4.5 L7 1.5" fill="none" stroke="#b8b8b8" stroke-width="0.95"/></svg></span><span class="ic" style="left:21px"><svg width="12" height="9" viewBox="0 0 12 9"><path d="M1 5 V2.6 Q1 1.8 1.8 1.8 H9.5 M8 0.4 L9.8 1.8 L8 3.2 M11 4 V6.4 Q11 7.2 10.2 7.2 H2.5 M4 5.8 L2.2 7.2 L4 8.6" fill="none" stroke="#e39a58" stroke-width="1.2"/></svg></span><span class="tx" style="left:33.30000000000001px;">While <span class="g">{{date_start&lt;=date_end}}</span></span></div>
<div class="sel" style="left:293px;top:163px;width:304px;height:14px"></div>
<div class="srow" style="top:163.39px"><span class="ic" style="left:15px"><svg width="8" height="6" viewBox="0 0 8 6"><path d="M1 1.5 L4 4.5 L7 1.5" fill="none" stroke="#ffffff" stroke-width="1"/></svg></span><span class="ic" style="left:26.5px"><svg width="11" height="10" viewBox="0 0 11 10"><path d="M5.5 0.3 L10.3 2.3 V7.7 L5.5 9.7 L0.7 7.7 V2.3 Z" fill="#ffffff"/><path d="M0.9 2.4 L5.5 4.4 L10.1 2.4 M5.5 4.4 V9.6" fill="none" stroke="#3e93f2" stroke-width="0.9"/><path d="M6.4 6.5 L8.8 5.5" stroke="#3e93f2" stroke-width="0.8"/></svg></span><span class="tx" style="left:39.69999999999999px;color:#fff;letter-spacing:-0.5px">EXEC</span></div>
<div class="srow" style="top:177.26px"><span class="ic" style="left:33px"><svg width="10" height="9" viewBox="0 0 10 9"><rect x="0.6" y="0.6" width="8.8" height="7.8" rx="0.6" fill="none" stroke="#8fd2c1" stroke-width="1.2"/><rect x="0.6" y="0.6" width="8.8" height="2.4" fill="#8fd2c1"/><path d="M5 3 V8.4 M0.6 5.7 H9.4" stroke="#8fd2c1" stroke-width="1.1"/></svg></span><span class="tx" style="left:46.30000000000001px;">Database Insert: <span class="b">insert_availability</span></span></div>
<div class="srow" style="top:191.13px"><span class="ic" style="left:33px"><svg width="10" height="10" viewBox="0 0 10 10"><circle cx="5" cy="5" r="4.7" fill="#e79a59"/><path d="M2.3 5 H7.3 M5 2.7 L7.3 5 L5 7.3" fill="none" stroke="#1b1b1b" stroke-width="0.95"/></svg></span><span class="tx" style="left:46.30000000000001px;">Set Value <span class="b">date_start</span> = <span class="g">{{date_start.dateAdd('days', 1)}}</span></span><span class="ic" style="left:213.5px"><svg width="8" height="7" viewBox="0 0 8 7"><path d="M3 0.5 H1 V6.5 H3 M4 3.5 H7.5 M5.8 1.8 L7.5 3.5 L5.8 5.2" fill="none" stroke="#e39a58" stroke-width="1"/></svg></span></div>
<!-- left tree -->
<div class="row" style="top:65.00px"><span class="ic" style="left:43px"><svg class="chev" width="6" height="8" viewBox="0 0 6 8"><path d="M1.5 1 L4.5 4 L1.5 7" fill="none" stroke="#8c8c8c" stroke-width="0.9"/></svg></span><span class="ic" style="left:54px"><svg width="11" height="8" viewBox="0 0 11 8"><path d="M0.5 1 Q0.5 0.3 1.2 0.3 L3.8 0.3 L4.8 1.3 L8.8 1.3 Q9.3 1.3 9.3 1.8 L9.3 2.8 L2.6 2.8 L0.5 7.5 Z" fill="#5d8ea3"/><path d="M2.3 3.4 L10.6 3.4 L8.8 7.7 L0.6 7.7 Z" fill="#6f9fb3"/></svg></span><span class="tx" style="left:67px">Zoom Meeting</span></div>
<div class="row" style="top:78.87px"><span class="ic" style="left:43px"><svg class="chev" width="6" height="8" viewBox="0 0 6 8"><path d="M1.5 1 L4.5 4 L1.5 7" fill="none" stroke="#8c8c8c" stroke-width="0.9"/></svg></span><span class="ic" style="left:54px"><svg width="11" height="8" viewBox="0 0 11 8"><path d="M0.5 1 Q0.5 0.3 1.2 0.3 L3.8 0.3 L4.8 1.3 L8.8 1.3 Q9.3 1.3 9.3 1.8 L9.3 2.8 L2.6 2.8 L0.5 7.5 Z" fill="#5d8ea3"/><path d="M2.3 3.4 L10.6 3.4 L8.8 7.7 L0.6 7.7 Z" fill="#6f9fb3"/></svg></span><span class="tx" style="left:67px">request-to-unlock</span></div>
<div class="row" style="top:92.74px"><span class="ic" style="left:43px"><svg class="chev" width="6" height="8" viewBox="0 0 6 8"><path d="M1.5 1 L4.5 4 L1.5 7" fill="none" stroke="#8c8c8c" stroke-width="0.9"/></svg></span><span class="ic" style="left:54px"><svg width="11" height="8" viewBox="0 0 11 8"><path d="M0.5 1 Q0.5 0.3 1.2 0.3 L3.8 0.3 L4.8 1.3 L8.8 1.3 Q9.3 1.3 9.3 1.8 L9.3 2.8 L2.6 2.8 L0.5 7.5 Z" fill="#5d8ea3"/><path d="M2.3 3.4 L10.6 3.4 L8.8 7.7 L0.6 7.7 Z" fill="#6f9fb3"/></svg></span><span class="tx" style="left:67px">reports</span></div>
<div class="row" style="top:106.61px"><span class="ic" style="left:43px"><svg class="chev" width="6" height="8" viewBox="0 0 6 8"><path d="M1.5 1 L4.5 4 L1.5 7" fill="none" stroke="#8c8c8c" stroke-width="0.9"/></svg></span><span class="ic" style="left:54px"><svg width="11" height="8" viewBox="0 0 11 8"><path d="M0.5 1 Q0.5 0.3 1.2 0.3 L3.8 0.3 L4.8 1.3 L8.8 1.3 Q9.3 1.3 9.3 1.8 L9.3 2.8 L2.6 2.8 L0.5 7.5 Z" fill="#5d8ea3"/><path d="M2.3 3.4 L10.6 3.4 L8.8 7.7 L0.6 7.7 Z" fill="#6f9fb3"/></svg></span><span class="tx" style="left:67px">patient-list</span></div>
<div class="row" style="top:120.48px"><span class="ic" style="left:43px"><svg class="chev" width="6" height="8" viewBox="0 0 6 8"><path d="M1.5 1 L4.5 4 L1.5 7" fill="none" stroke="#8c8c8c" stroke-width="0.9"/></svg></span><span class="ic" style="left:54px"><svg width="11" height="8" viewBox="0 0 11 8"><path d="M0.5 1 Q0.5 0.3 1.2 0.3 L3.8 0.3 L4.8 1.3 L8.8 1.3 Q9.3 1.3 9.3 1.8 L9.3 2.8 L2.6 2.8 L0.5 7.5 Z" fill="#5d8ea3"/><path d="M2.3 3.4 L10.6 3.4 L8.8 7.7 L0.6 7.7 Z" fill="#6f9fb3"/></svg></span><span class="tx" style="left:67px">members</span></div>
<div class="row" style="top:134.35px"><span class="ic" style="left:43px"><svg class="chev" width="6" height="8" viewBox="0 0 6 8"><path d="M1.5 1 L4.5 4 L1.5 7" fill="none" stroke="#8c8c8c" stroke-width="0.9"/></svg></span><span class="ic" style="left:54px"><svg width="11" height="8" viewBox="0 0 11 8"><path d="M0.5 1 Q0.5 0.3 1.2 0.3 L3.8 0.3 L4.8 1.3 L8.8 1.3 Q9.3 1.3 9.3 1.8 L9.3 2.8 L2.6 2.8 L0.5 7.5 Z" fill="#5d8ea3"/><path d="M2.3 3.4 L10.6 3.4 L8.8 7.7 L0.6 7.7 Z" fill="#6f9fb3"/></svg></span><span class="tx" style="left:67px">master-account-reports</span></div>
<div class="row" style="top:148.22px"><span class="ic" style="left:43px"><svg class="chev" width="6" height="8" viewBox="0 0 6 8"><path d="M1.5 1 L4.5 4 L1.5 7" fill="none" stroke="#8c8c8c" stroke-width="0.9"/></svg></span><span class="ic" style="left:54px"><svg width="11" height="8" viewBox="0 0 11 8"><path d="M0.5 1 Q0.5 0.3 1.2 0.3 L3.8 0.3 L4.8 1.3 L8.8 1.3 Q9.3 1.3 9.3 1.8 L9.3 2.8 L2.6 2.8 L0.5 7.5 Z" fill="#5d8ea3"/><path d="M2.3 3.4 L10.6 3.4 L8.8 7.7 L0.6 7.7 Z" fill="#6f9fb3"/></svg></span><span class="tx" style="left:67px">mail</span></div>
<div class="row" style="top:162.09px"><span class="ic" style="left:43px"><svg class="chev" width="6" height="8" viewBox="0 0 6 8"><path d="M1.5 1 L4.5 4 L1.5 7" fill="none" stroke="#8c8c8c" stroke-width="0.9"/></svg></span><span class="ic" style="left:54px"><svg width="11" height="8" viewBox="0 0 11 8"><path d="M0.5 1 Q0.5 0.3 1.2 0.3 L3.8 0.3 L4.8 1.3 L8.8 1.3 Q9.3 1.3 9.3 1.8 L9.3 2.8 L2.6 2.8 L0.5 7.5 Z" fill="#5d8ea3"/><path d="M2.3 3.4 L10.6 3.4 L8.8 7.7 L0.6 7.7 Z" fill="#6f9fb3"/></svg></span><span class="tx" style="left:67px">admin</span></div>
<div class="row" style="top:175.96px"><span class="ic" style="left:43px"><svg class="chev" width="6" height="8" viewBox="0 0 6 8"><path d="M1.5 1 L4.5 4 L1.5 7" fill="none" stroke="#8c8c8c" stroke-width="0.9"/></svg></span><span class="ic" style="left:54px"><svg width="11" height="8" viewBox="0 0 11 8"><path d="M0.5 1 Q0.5 0.3 1.2 0.3 L3.8 0.3 L4.8 1.3 L8.8 1.3 Q9.3 1.3 9.3 1.8 L9.3 2.8 L2.6 2.8 L0.5 7.5 Z" fill="#5d8ea3"/><path d="M2.3 3.4 L10.6 3.4 L8.8 7.7 L0.6 7.7 Z" fill="#6f9fb3"/></svg></span><span class="tx" style="left:67px">media_manager</span></div>
<div class="row" style="top:189.83px"><span class="ic" style="left:43px"><svg class="chev" width="6" height="8" viewBox="0 0 6 8"><path d="M1.5 1 L4.5 4 L1.5 7" fill="none" stroke="#8c8c8c" stroke-width="0.9"/></svg></span><span class="ic" style="left:54px"><svg width="11" height="8" viewBox="0 0 11 8"><path d="M0.5 1 Q0.5 0.3 1.2 0.3 L3.8 0.3 L4.8 1.3 L8.8 1.3 Q9.3 1.3 9.3 1.8 L9.3 2.8 L2.6 2.8 L0.5 7.5 Z" fill="#5d8ea3"/><path d="M2.3 3.4 L10.6 3.4 L8.8 7.7 L0.6 7.7 Z" fill="#6f9fb3"/></svg></span><span class="tx" style="left:67px">regional-manager-reports</span></div>
<div class="row" style="top:203.70px"><span class="ic" style="left:43px"><svg class="chev" width="6" height="8" viewBox="0 0 6 8"><path d="M1.5 1 L4.5 4 L1.5 7" fill="none" stroke="#8c8c8c" stroke-width="0.9"/></svg></span><span class="ic" style="left:54px"><svg width="11" height="8" viewBox="0 0 11 8"><path d="M0.5 1 Q0.5 0.3 1.2 0.3 L3.8 0.3 L4.8 1.3 L8.8 1.3 Q9.3 1.3 9.3 1.8 L9.3 2.8 L2.6 2.8 L0.5 7.5 Z" fill="#5d8ea3"/><path d="M2.3 3.4 L10.6 3.4 L8.8 7.7 L0.6 7.7 Z" fill="#6f9fb3"/></svg></span><span class="tx" style="left:67px">School Reports</span></div>
<div class="row" style="top:217.57px"><span class="ic" style="left:43px"><svg class="chev" width="6" height="8" viewBox="0 0 6 8"><path d="M1.5 1 L4.5 4 L1.5 7" fill="none" stroke="#8c8c8c" stroke-width="0.9"/></svg></span><span class="ic" style="left:54px"><svg width="11" height="8" viewBox="0 0 11 8"><path d="M0.5 1 Q0.5 0.3 1.2 0.3 L3.8 0.3 L4.8 1.3 L8.8 1.3 Q9.3 1.3 9.3 1.8 L9.3 2.8 L2.6 2.8 L0.5 7.5 Z" fill="#5d8ea3"/><path d="M2.3 3.4 L10.6 3.4 L8.8 7.7 L0.6 7.7 Z" fill="#6f9fb3"/></svg></span><span class="tx" style="left:67px">patient_questionaire</span></div>
<div class="row" style="top:231.44px"><span class="ic" style="left:43px"><svg class="chev" width="6" height="8" viewBox="0 0 6 8"><path d="M1.5 1 L4.5 4 L1.5 7" fill="none" stroke="#8c8c8c" stroke-width="0.9"/></svg></span><span class="ic" style="left:54px"><svg width="11" height="8" viewBox="0 0 11 8"><path d="M0.5 1 Q0.5 0.3 1.2 0.3 L3.8 0.3 L4.8 1.3 L8.8 1.3 Q9.3 1.3 9.3 1.8 L9.3 2.8 L2.6 2.8 L0.5 7.5 Z" fill="#5d8ea3"/><path d="M2.3 3.4 L10.6 3.4 L8.8 7.7 L0.6 7.7 Z" fill="#6f9fb3"/></svg></span><span class="tx" style="left:67px">concussion_symptom_checklist</span></div>
<div class="row" style="top:245.31px"><span class="ic" style="left:43px"><svg class="chev" width="6" height="8" viewBox="0 0 6 8"><path d="M1.5 1 L4.5 4 L1.5 7" fill="none" stroke="#8c8c8c" stroke-width="0.9"/></svg></span><span class="ic" style="left:54px"><svg width="11" height="8" viewBox="0 0 11 8"><path d="M0.5 1 Q0.5 0.3 1.2 0.3 L3.8 0.3 L4.8 1.3 L8.8 1.3 Q9.3 1.3 9.3 1.8 L9.3 2.8 L2.6 2.8 L0.5 7.5 Z" fill="#5d8ea3"/><path d="M2.3 3.4 L10.6 3.4 L8.8 7.7 L0.6 7.7 Z" fill="#6f9fb3"/></svg></span><span class="tx" style="left:67px">patient_shin_questionaire</span></div>
<div class="row" style="top:259.18px"><span class="ic" style="left:43px"><svg class="chev" width="6" height="8" viewBox="0 0 6 8"><path d="M1.5 1 L4.5 4 L1.5 7" fill="none" stroke="#8c8c8c" stroke-width="0.9"/></svg></span><span class="ic" style="left:54px"><svg width="11" height="8" viewBox="0 0 11 8"><path d="M0.5 1 Q0.5 0.3 1.2 0.3 L3.8 0.3 L4.8 1.3 L8.8 1.3 Q9.3 1.3 9.3 1.8 L9.3 2.8 L2.6 2.8 L0.5 7.5 Z" fill="#5d8ea3"/><path d="M2.3 3.4 L10.6 3.4 L8.8 7.7 L0.6 7.7 Z" fill="#6f9fb3"/></svg></span><span class="tx" style="left:67px">login</span></div>
<div class="row" style="top:273.05px"><span class="ic" style="left:42.5px"><svg class="chev" width="8" height="6" viewBox="0 0 8 6"><path d="M1 1.5 L4 4.5 L7 1.5" fill="none" stroke="#b0b0b0" stroke-width="0.95"/></svg></span><span class="ic" style="left:54px"><svg width="11" height="8" viewBox="0 0 11 8"><path d="M0.5 1 Q0.5 0.3 1.2 0.3 L3.8 0.3 L4.8 1.3 L8.8 1.3 Q9.3 1.3 9.3 1.8 L9.3 2.8 L2.6 2.8 L0.5 7.5 Z" fill="#5d8ea3"/><path d="M2.3 3.4 L10.6 3.4 L8.8 7.7 L0.6 7.7 Z" fill="#6f9fb3"/></svg></span><span class="tx" style="left:67px">appointment_scheduler</span></div>
<div class="sel" style="left:47px;width:227px;top:286px;height:14px"></div>
<div class="row" style="top:286.92px"><span class="ic" style="left:61px"><svg width="10" height="10" viewBox="0 0 10 10"><circle cx="5" cy="5" r="4.6" fill="#ffffff"/><path d="M3.8 2.7 L7.2 5 L3.8 7.3 Z" fill="#3e93f2"/></svg></span><span class="tx" style="left:74px;color:#fff">show_calendar</span></div>
<div class="row" style="top:300.79px"><span class="ic" style="left:61px"><svg width="10" height="10" viewBox="0 0 10 10"><circle cx="5" cy="5" r="4.6" fill="#d58a4c"/><path d="M3.8 2.7 L7.2 5 L3.8 7.3 Z" fill="#1b1b1b"/></svg></span><span class="tx" style="left:74px">show_calendar_copy</span></div>
<div class="row" style="top:314.66px"><span class="ic" style="left:54px"><svg width="10" height="10" viewBox="0 0 10 10"><circle cx="5" cy="5" r="4.6" fill="#d58a4c"/><path d="M3.8 2.7 L7.2 5 L3.8 7.3 Z" fill="#1b1b1b"/></svg></span><span class="tx" style="left:67px">school_list</span></div>
<div class="row" style="top:328.53px"><span class="ic" style="left:54px"><svg width="10" height="10" viewBox="0 0 10 10"><circle cx="5" cy="5" r="4.6" fill="#d58a4c"/><path d="M3.8 2.7 L7.2 5 L3.8 7.3 Z" fill="#1b1b1b"/></svg></span><span class="tx" style="left:67px">patient_care_summary</span></div>
<div class="row" style="top:342.40px"><span class="ic" style="left:54px"><svg width="10" height="10" viewBox="0 0 10 10"><circle cx="5" cy="5" r="4.6" fill="#d58a4c"/><path d="M3.8 2.7 L7.2 5 L3.8 7.3 Z" fill="#1b1b1b"/></svg></span><span class="tx" style="left:67px">mental_health_auth_verification</span></div>
<div class="row" style="top:356.27px"><span class="ic" style="left:54px"><svg width="10" height="10" viewBox="0 0 10 10"><circle cx="5" cy="5" r="4.6" fill="#d58a4c"/><path d="M3.8 2.7 L7.2 5 L3.8 7.3 Z" fill="#1b1b1b"/></svg></span><span class="tx" style="left:67px">mental_health_sections</span></div>
<div class="row" style="top:370.14px"><span class="ic" style="left:54px"><svg width="10" height="10" viewBox="0 0 10 10"><circle cx="5" cy="5" r="4.6" fill="#d58a4c"/><path d="M3.8 2.7 L7.2 5 L3.8 7.3 Z" fill="#1b1b1b"/></svg></span><span class="tx" style="left:67px">report_referral</span></div>
<div class="row" style="top:384.01px"><span class="ic" style="left:54px"><svg width="10" height="10" viewBox="0 0 10 10"><circle cx="5" cy="5" r="4.6" fill="#d58a4c"/><path d="M3.8 2.7 L7.2 5 L3.8 7.3 Z" fill="#1b1b1b"/></svg></span><span class="tx" style="left:67px">report_patient_care_summary</span></div>
<div class="row" style="top:397.88px"><span class="ic" style="left:54px"><svg width="10" height="10" viewBox="0 0 10 10"><circle cx="5" cy="5" r="4.6" fill="#d58a4c"/><path d="M3.8 2.7 L7.2 5 L3.8 7.3 Z" fill="#1b1b1b"/></svg></span><span class="tx" style="left:67px">report_coaches_documents</span></div>
<div class="row" style="top:411.75px"><span class="ic" style="left:54px"><svg width="10" height="10" viewBox="0 0 10 10"><circle cx="5" cy="5" r="4.6" fill="#d58a4c"/><path d="M3.8 2.7 L7.2 5 L3.8 7.3 Z" fill="#1b1b1b"/></svg></span><span class="tx" style="left:67px">reports_treatment</span></div>
<div class="row" style="top:425.62px"><span class="ic" style="left:54px"><svg width="10" height="10" viewBox="0 0 10 10"><circle cx="5" cy="5" r="4.6" fill="#d58a4c"/><path d="M3.8 2.7 L7.2 5 L3.8 7.3 Z" fill="#1b1b1b"/></svg></span><span class="tx" style="left:67px">export_to_csv</span></div>
<div class="row" style="top:439.49px"><span class="ic" style="left:54px"><svg width="10" height="10" viewBox="0 0 10 10"><circle cx="5" cy="5" r="4.6" fill="#d58a4c"/><path d="M3.8 2.7 L7.2 5 L3.8 7.3 Z" fill="#1b1b1b"/></svg></span><span class="tx" style="left:67px">admin_trainer_list</span></div>
<div class="row" style="top:453.36px"><span class="ic" style="left:54px"><svg width="10" height="10" viewBox="0 0 10 10"><circle cx="5" cy="5" r="4.6" fill="#d58a4c"/><path d="M3.8 2.7 L7.2 5 L3.8 7.3 Z" fill="#1b1b1b"/></svg></span><span class="tx" style="left:67px">concussion_symptom_sender</span></div>

</body></html>
